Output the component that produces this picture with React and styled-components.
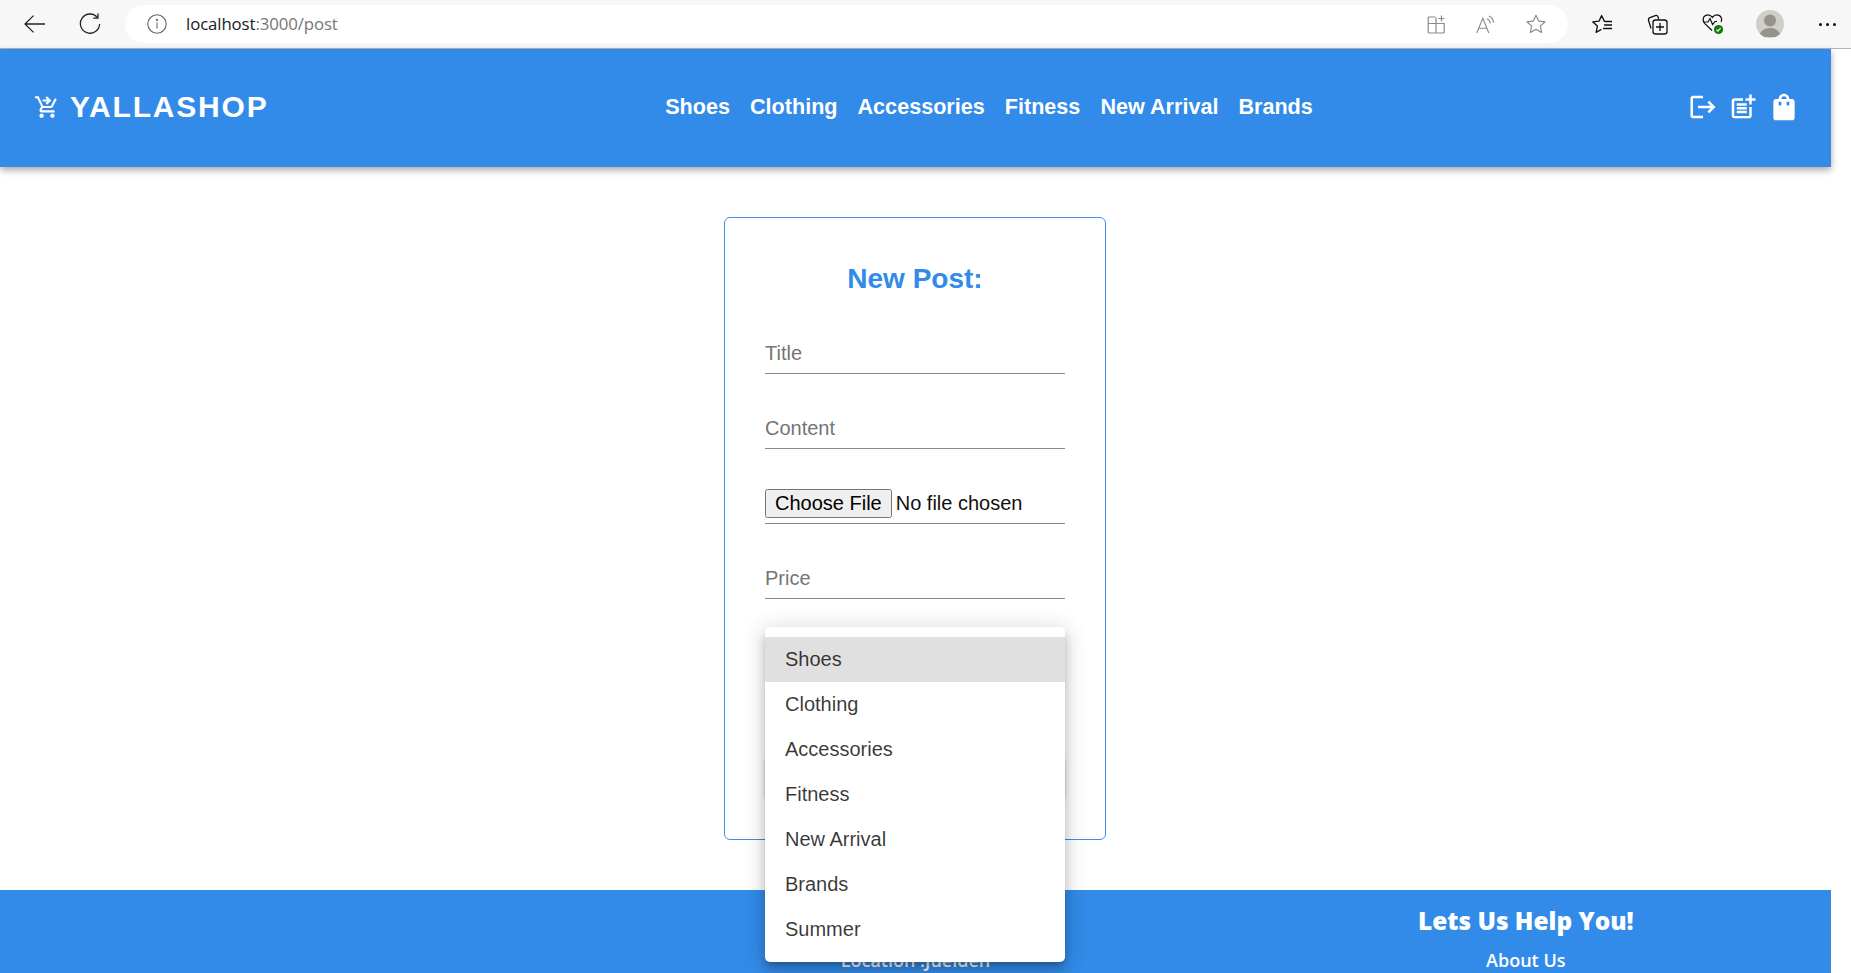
import React from 'react';
import styled, { createGlobalStyle } from 'styled-components';
import {
  MdLogout,
  MdPostAdd,
  MdShoppingBag,
  MdShoppingCartCheckout,
} from 'react-icons/md';

const BLUE = '#328be8';

const GlobalStyle = createGlobalStyle`
  html, body {
    margin: 0;
    height: 100%;
    overflow: hidden;
    background: #ffffff;
    font-family: 'Liberation Sans', Arial, sans-serif;
  }
  #root {
    height: 100%;
    overflow: hidden;
  }
`;

/* browser chrome */

const BrowserBar = styled.div`
  display: flex;
  align-items: center;
  height: 48px;
  padding-left: 7px;
  background: #f7f7f7;
  border-bottom: 1px solid #b4b4b4;
  overflow: hidden;
`;

const ToolButton = styled.div`
  flex: none;
  display: flex;
  align-items: center;
  justify-content: center;
  width: ${(p) => p.$w || 55}px;
  height: 48px;
`;

const AddressPill = styled.div`
  flex: none;
  display: flex;
  align-items: center;
  width: 1443px;
  height: 38px;
  margin-left: 8px;
  margin-right: 7px;
  padding: 0 7px 0 22px;
  box-sizing: border-box;
  background: #ffffff;
  border-radius: 19px;
`;

const AddressText = styled.div`
  flex: 1;
  margin: 0 0 2px 19px;
  font-family: 'Open Sans', sans-serif;
  font-size: 16.8px;
  letter-spacing: -0.1px;
  color: #767676;

  b {
    font-weight: 400;
    color: #1a1a1a;
  }
`;

const PillIcon = styled.div`
  flex: none;
  display: flex;
  align-items: center;
  justify-content: center;
  width: 50px;
`;

const Avatar = styled.div`
  width: 28px;
  height: 28px;
  border-radius: 50%;
  background: #d0cec9;
  overflow: hidden;
`;

const Dots = styled.div`
  display: flex;
  gap: 4px;
  margin-left: 2px;

  i {
    width: 3px;
    height: 3px;
    border-radius: 50%;
    background: #111;
  }
`;

/* page */

const Page = styled.div`
  width: calc(100% - 20px);
`;

const NavBar = styled.header`
  position: relative;
  display: flex;
  align-items: center;
  justify-content: space-between;
  height: 118px;
  padding: 0 31px 2px 34px;
  box-sizing: border-box;
  background: ${BLUE};
  color: #ffffff;
  box-shadow: 0 3px 7px rgba(0, 0, 0, 0.35);
`;

const Logo = styled.div`
  display: flex;
  align-items: center;
  gap: 10px;
  min-width: 256px;
  font-size: 30px;
  font-weight: 700;
  letter-spacing: 1.8px;
`;

const NavLinks = styled.nav`
  display: flex;
  gap: 20px;
  font-size: 21.6px;
  font-weight: 700;
`;

const NavIcons = styled.div`
  display: flex;
  align-items: center;
  gap: 10px;
`;

const Main = styled.main`
  display: flex;
  justify-content: center;
  padding: 50px 1px 50px 0;
`;

const Card = styled.form`
  display: flex;
  flex-direction: column;
  gap: 33px;
  width: 382px;
  padding: 39px 40px 40px;
  box-sizing: border-box;
  border: 1px solid #3f8ee2;
  border-radius: 6px;
`;

const Heading = styled.h2`
  margin: 0;
  padding-top: 2px;
  text-align: center;
  font-size: 28px;
  line-height: 40px;
  font-weight: 700;
  color: ${BLUE};
`;

const Field = styled.div`
  position: relative;
  display: flex;
  align-items: center;
  height: 42px;
  padding-top: 2px;
  box-sizing: border-box;
  border-bottom: 1px solid #8a8a8a;
`;

const TextInput = styled.input`
  width: 100%;
  height: 100%;
  padding: 0;
  border: none;
  outline: none;
  background: transparent;
  font: 20px 'Liberation Sans', Arial, sans-serif;
  color: #222;

  &::placeholder {
    color: #757575;
    opacity: 1;
  }
`;

const FileInput = styled.input`
  width: 100%;
  font: 20px 'Liberation Sans', Arial, sans-serif;
  color: #111;

  &::file-selector-button {
    height: 29px;
    padding: 0 8px;
    margin-right: 4px;
    font: inherit;
  }
`;

const SubmitButton = styled.button`
  height: 42px;
  margin-top: 50px;
  border: none;
  border-radius: 4px;
  background: #e0e0e0;
  box-shadow: 0 3px 1px -2px rgba(0, 0, 0, 0.2), 0 2px 2px 0 rgba(0, 0, 0, 0.14),
    0 1px 5px 0 rgba(0, 0, 0, 0.12);
`;

const Menu = styled.ul`
  position: absolute;
  top: -5px;
  left: 0;
  right: 0;
  z-index: 10;
  margin: 0;
  padding: 10px 0;
  list-style: none;
  background: #ffffff;
  border-radius: 5px;
  box-shadow: 0 5px 5px -3px rgba(0, 0, 0, 0.2), 0 8px 10px 1px rgba(0, 0, 0, 0.14),
    0 3px 22px 3px rgba(0, 0, 0, 0.14);
`;

const MenuItem = styled.li`
  height: 45px;
  padding-left: 20px;
  font-size: 20px;
  line-height: 45px;
  color: rgba(0, 0, 0, 0.78);
  background: ${(p) => (p.$selected ? '#e0e0e0' : 'transparent')};
`;

const Footer = styled.footer`
  display: grid;
  grid-template-columns: repeat(3, 1fr);
  height: 200px;
  padding-top: 13px;
  box-sizing: border-box;
  background: ${BLUE};
  color: #ffffff;
  text-align: center;
  font-family: 'Open Sans', sans-serif;
`;

const FooterTitle = styled.h3`
  margin: 0 0 8px;
  font-size: 24.4px;
  line-height: 36px;
  font-weight: 800;
`;

const FooterLine = styled.div`
  font-size: 18px;
  line-height: 26px;
  font-weight: 600;
`;

/* drawn browser icons */

const BackIcon = () => (
  <svg width="21" height="18" viewBox="0 0 21 18" fill="none" stroke="#222" strokeWidth="1.3">
    <path d="M21 9H1M9.500 .6 1 9l8.500 8.400" />
  </svg>
);

const RefreshIcon = () => (
  <svg width="22" height="22" viewBox="0 0 22 22" fill="none" stroke="#222" strokeWidth="1.3">
    <path d="M18.500 4.600A9.600 9.600 0 1 0 20.600 11" />
    <path d="M19 .6v4.600h-4.800" />
  </svg>
);

const InfoIcon = () => (
  <svg width="20" height="20" viewBox="0 0 20 20" fill="none" stroke="#666" strokeWidth="1.1">
    <circle cx="10" cy="10" r="9.200" />
    <path d="M10 8.600v6" />
    <circle cx="10" cy="5.900" r=".5" fill="#666" />
  </svg>
);

const AppsIcon = () => (
  <svg width="19" height="19" viewBox="0 0 19 19" fill="none" stroke="#8a8a8a" strokeWidth="1.2">
    <path d="M8.500 2H2.200a1 1 0 0 0-1 1v14a1 1 0 0 0 1 1h14a1 1 0 0 0 1-1V8.500H1.200M9 2.500V18" />
    <path d="M14.500 .5v6M11.500 3.500h6" />
  </svg>
);

const ReadAloudIcon = () => (
  <svg width="20" height="19" viewBox="0 0 20 19" fill="none" stroke="#8a8a8a" strokeWidth="1.1">
    <path d="M.8 18 6.800 3.200 12.800 18M2.800 13.200h8" />
    <path d="M11 3.800c2 .8 3 2.400 3.300 4.600M12.800 1c3 1.200 4.600 3.600 5 6.800" />
  </svg>
);

const StarIcon = () => (
  <svg width="20" height="20" viewBox="0 0 20 20" fill="none" stroke="#8a8a8a" strokeWidth="1.2">
    <path
      d="M10 1.200l2.700 5.900 6.400.7-4.800 4.300 1.300 6.300L10 15.200l-5.600 3.200 1.300-6.300L.9 7.800l6.400-.7z"
      strokeLinejoin="round"
    />
  </svg>
);

const FavoritesIcon = () => (
  <svg width="21" height="20" viewBox="0 0 21 20" fill="none" stroke="#111" strokeWidth="1.3">
    <path
      d="M13 7.400h-.6L9.600 1.500 7 7.200l-6.200.7 4.600 4.200-1.300 6.300 5.300-3"
      strokeLinejoin="round"
    />
    <path d="M13 7.500h7M12 11h8M11 14.500h9" />
  </svg>
);

const CollectionsIcon = () => (
  <svg width="21" height="21" viewBox="0 0 21 21" fill="none" stroke="#111" strokeWidth="1.3">
    <path d="M4 14.500 1.600 6.500c-.4-1.400 0-2.400 1.400-2.900L8.200 1.600c1.300-.4 2.400.1 2.900 1.300L11.600 5" />
    <rect x="6" y="6" width="14" height="14" rx="2.600" />
    <path d="M13 9v8M9 13h8" />
  </svg>
);

const HealthIcon = () => (
  <svg width="22" height="22" viewBox="0 0 22 22" fill="none">
    <path
      d="M10 17.500 2.600 10.400C.2 7.800.8 3.600 3.800 2.400c2.400-1 4.800-.2 6.600 2 1.800-2.200 4.200-3 6.600-2 2.600 1.200 3.400 4.400 2 6.600"
      stroke="#111"
      strokeWidth="1.3"
    />
    <path d="M1 9h5l2-3.400 2.600 6L13 8.500h2" stroke="#111" strokeWidth="1.2" />
    <circle cx="16.500" cy="16.500" r="4.600" fill="#107c10" />
    <path d="M14.400 16.600l1.500 1.500 2.700-3" stroke="#fff" strokeWidth="1.1" />
  </svg>
);

const AvatarFigure = () => (
  <svg width="28" height="28" viewBox="0 0 28 28" fill="#96928d">
    <circle cx="14" cy="10.500" r="6" />
    <path d="M3 27c1-6 5.500-9 11-9s10 3 11 9z" />
  </svg>
);

const categories = ['Shoes', 'Clothing', 'Accessories', 'Fitness', 'New Arrival', 'Brands', 'Summer'];
const navItems = ['Shoes', 'Clothing', 'Accessories', 'Fitness', 'New Arrival', 'Brands'];

const App = () => (
  <>
    <GlobalStyle />
    <BrowserBar>
      <ToolButton><BackIcon /></ToolButton>
      <ToolButton><RefreshIcon /></ToolButton>
      <AddressPill>
        <InfoIcon />
        <AddressText><b>localhost</b>:3000/post</AddressText>
        <PillIcon><AppsIcon /></PillIcon>
        <PillIcon><ReadAloudIcon /></PillIcon>
        <PillIcon><StarIcon /></PillIcon>
      </AddressPill>
      <ToolButton><FavoritesIcon /></ToolButton>
      <ToolButton><CollectionsIcon /></ToolButton>
      <ToolButton><HealthIcon /></ToolButton>
      <ToolButton $w={59}><Avatar><AvatarFigure /></Avatar></ToolButton>
      <ToolButton><Dots><i /><i /><i /></Dots></ToolButton>
    </BrowserBar>
    <Page>
      <NavBar>
        <Logo>
          <MdShoppingCartCheckout size={26} />
          YALLASHOP
        </Logo>
        <NavLinks>
          {navItems.map((item) => (
            <span key={item}>{item}</span>
          ))}
        </NavLinks>
        <NavIcons>
          <MdLogout size={30} />
          <MdPostAdd size={30} />
          <MdShoppingBag size={32} />
        </NavIcons>
      </NavBar>
      <Main>
        <Card>
          <Heading>New Post:</Heading>
          <Field><TextInput placeholder="Title" /></Field>
          <Field><TextInput placeholder="Content" /></Field>
          <Field><FileInput type="file" /></Field>
          <Field><TextInput placeholder="Price" /></Field>
          <Field>
            <Menu>
              {categories.map((cat, i) => (
                <MenuItem key={cat} $selected={i === 0}>{cat}</MenuItem>
              ))}
            </Menu>
          </Field>
          <SubmitButton type="button" aria-label="Submit" />
        </Card>
      </Main>
      <Footer>
        <div />
        <div>
          <FooterTitle aria-hidden="true">&nbsp;</FooterTitle>
          <FooterLine>Location :Jueiden</FooterLine>
        </div>
        <div>
          <FooterTitle>Lets Us Help You!</FooterTitle>
          <FooterLine>About Us</FooterLine>
        </div>
      </Footer>
    </Page>
  </>
);

export default App;
